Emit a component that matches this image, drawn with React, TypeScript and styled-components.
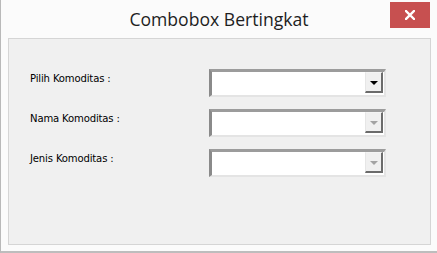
import React from 'react';
import styled, { createGlobalStyle } from 'styled-components';

const GlobalStyle = createGlobalStyle`
  html, body {
    margin: 0;
    padding: 0;
    background: #ffffff;
  }
`;

const Window = styled.div`
  width: 437px;
  height: 253px;
  box-sizing: border-box;
  background: #fbfbfb;
  border-left: 1px solid #b9b9b9;
  border-bottom: 2px solid #bdbdbd;
  display: flex;
  flex-direction: column;
`;

const TitleBar = styled.div`
  height: 38px;
  display: grid;
  grid-template-columns: 1fr auto 1fr;
  align-items: start;
`;

const Title = styled.div`
  grid-column: 2;
  margin-top: 7px;
  font-family: "Open Sans", "Noto Sans", sans-serif;
  font-size: 17.6px;
  line-height: 24px;
  color: #1e1e1e;
`;

const CloseButton = styled.div`
  grid-column: 3;
  justify-self: end;
  margin-top: 2px;
  margin-right: 7px;
  width: 40px;
  height: 26px;
  background: #c75050;
  display: flex;
  align-items: center;
  justify-content: center;
`;

const Panel = styled.div`
  margin: 0 6px 6px 7px;
  height: 207px;
  box-sizing: border-box;
  border: 1px solid #d5d5d5;
  background: #f0f0f0;
  padding: 30px 0 0 21px;
  display: grid;
  grid-template-columns: 179px 177px;
  grid-auto-rows: 28px;
  row-gap: 12px;
  align-content: start;
`;

const Label = styled.div`
  padding-top: 3px;
  font-family: "DejaVu Sans Condensed", "DejaVu Sans", Tahoma, sans-serif;
  font-stretch: condensed;
  font-size: 11.2px;
  letter-spacing: -0.15px;
  line-height: 13px;
  color: #000;
`;

const Combo = styled.div`
  box-sizing: border-box;
  height: 28px;
  background: #ffffff;
  border-top: 3px solid #9c9c9c;
  border-left: 3px solid #8a8a8a;
  border-right: 2px solid #e4e4e4;
  border-bottom: 2px solid #e4e4e4;
  display: flex;
  justify-content: flex-end;
  align-items: flex-start;
`;

const DropButton = styled.div`
  box-sizing: border-box;
  width: 18px;
  height: 21px;
  margin-right: 1px;
  background: #f0f0f0;
  border-top: 1px solid #f4f4f4;
  border-left: 1px solid #e6e6e6;
  border-right: 2px solid #6b6b6b;
  border-bottom: 2px solid #6b6b6b;
  display: flex;
  align-items: center;
  justify-content: center;
`;

const Arrow = styled.div<{ $enabled: boolean }>`
  width: 0;
  height: 0;
  border-left: 4px solid transparent;
  border-right: 4px solid transparent;
  border-top: 4px solid ${(p) => (p.$enabled ? '#000000' : '#a3a3a3')};
  margin-top: 1px;
`;

const rows = [
  { label: 'Pilih Komoditas :', enabled: true },
  { label: 'Nama Komoditas :', enabled: false },
  { label: 'Jenis Komoditas :', enabled: false },
];

const App: React.FC = () => {
  return (
    <>
      <GlobalStyle />
      <Window>
        <TitleBar>
          <Title>Combobox Bertingkat</Title>
          <CloseButton>
            <svg width="10" height="10" viewBox="0 0 10 10">
              <path d="M1 1 L9 9 M9 1 L1 9" stroke="#ffffff" strokeWidth="2.4" strokeLinecap="square" />
            </svg>
          </CloseButton>
        </TitleBar>
        <Panel>
          {rows.map((r) => (
            <React.Fragment key={r.label}>
              <Label>{r.label}</Label>
              <Combo>
                <DropButton>
                  <Arrow $enabled={r.enabled} />
                </DropButton>
              </Combo>
            </React.Fragment>
          ))}
        </Panel>
      </Window>
    </>
  );
};

export default App;
